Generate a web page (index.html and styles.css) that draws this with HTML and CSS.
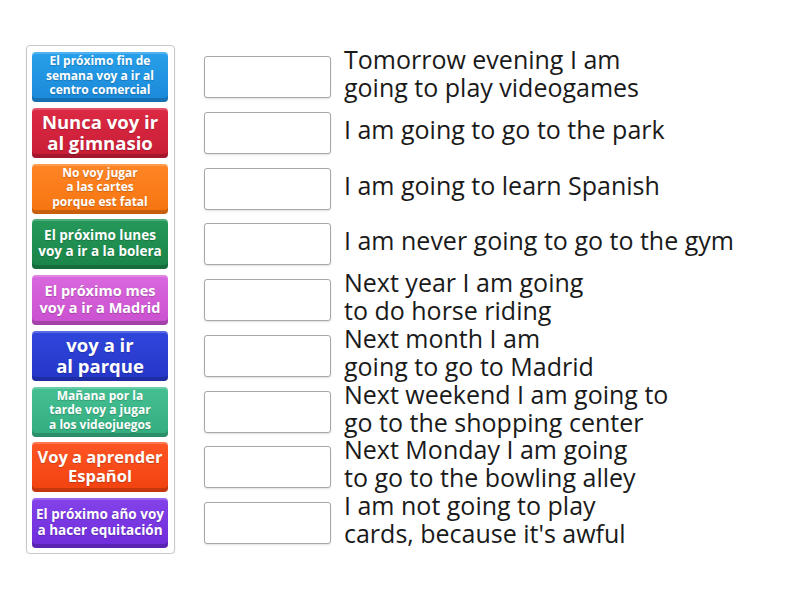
FILE: index.html
```html
<!DOCTYPE html>
<html>
<head>
<meta charset="utf-8">
<link rel="stylesheet" href="styles.css">
</head>
<body>
<div class="game">
  <div class="bank">
    <div class="tile t-blue s12">El próximo fin de<br>semana voy a ir al<br>centro comercial</div>
    <div class="tile t-red s18">Nunca voy ir<br>al gimnasio</div>
    <div class="tile t-orange s12">No voy jugar<br>a las cartes<br>porque est fatal</div>
    <div class="tile t-green s13">El próximo lunes<br>voy a ir a la bolera</div>
    <div class="tile t-pink s14">El próximo mes<br>voy a ir a Madrid</div>
    <div class="tile t-indigo s18">voy a ir<br>al parque</div>
    <div class="tile t-teal s12">Mañana por la<br>tarde voy a jugar<br>a los videojuegos</div>
    <div class="tile t-flame s16">Voy a aprender<br>Español</div>
    <div class="tile t-purple s13">El próximo año voy<br>a hacer equitación</div>
  </div>
  <div class="targets">
    <div class="row"><div class="slot"></div><div class="label">Tomorrow evening I am<br>going to play videogames</div></div>
    <div class="row"><div class="slot"></div><div class="label">I am going to go to the park</div></div>
    <div class="row"><div class="slot"></div><div class="label">I am going to learn Spanish</div></div>
    <div class="row"><div class="slot"></div><div class="label">I am never going to go to the gym</div></div>
    <div class="row"><div class="slot"></div><div class="label">Next year I am going<br>to do horse riding</div></div>
    <div class="row"><div class="slot"></div><div class="label">Next month I am<br>going to go to Madrid</div></div>
    <div class="row"><div class="slot"></div><div class="label">Next weekend I am going to<br>go to the shopping center</div></div>
    <div class="row"><div class="slot"></div><div class="label">Next Monday I am going<br>to go to the bowling alley</div></div>
    <div class="row"><div class="slot"></div><div class="label">I am not going to play<br>cards, because it's awful</div></div>
  </div>
</div>
</body>
</html>
```
FILE: styles.css
```css
html, body {
  margin: 0;
  padding: 0;
  background: #fff;
}
body {
  font-family: "Open Sans", "DejaVu Sans", sans-serif;
}
.game {
  display: flex;
  align-items: flex-start;
  padding: 45px 0 0 26px;
  gap: 29px;
}
.bank {
  width: 136px;
  padding: 6px 6px 5px 5px;
  border: 1px solid #c8c8c8;
  border-radius: 4px;
  display: flex;
  flex-direction: column;
  gap: 5.75px;
  box-shadow: 0 1px 2px rgba(0,0,0,0.08);
}
.tile {
  height: 50px;
  border-radius: 4px;
  color: #fff;
  font-weight: 700;
  text-align: center;
  display: flex;
  align-items: center;
  justify-content: center;
  box-sizing: border-box;
  padding-bottom: 2px;
  box-shadow: inset 0 -4px 0 rgba(0,0,0,0.18), inset 0 2px 0 rgba(255,255,255,0.2);
  text-shadow: 0 1px 1px rgba(0,0,0,0.2);
}
.s12 { font-size: 12px; line-height: 14.5px; }
.s13 { font-size: 13.5px; line-height: 16px; }
.s14 { font-size: 14.5px; line-height: 17px; }
.s16 { font-size: 16.5px; line-height: 19px; }
.s18 { font-size: 18.5px; line-height: 21px; }
.t-blue { background: linear-gradient(#27a0ea, #1b88d8); }
.t-red { background: linear-gradient(#dc2a44, #c81d36); }
.t-orange { background: linear-gradient(#ff8526, #f5740f); }
.t-green { background: linear-gradient(#25995a, #1a8447); }
.t-pink { background: linear-gradient(#da68dd, #c94fcf); }
.t-indigo { background: linear-gradient(#3046dc, #2536c8); }
.t-teal { background: linear-gradient(#45c093, #33ad7f); }
.t-flame { background: linear-gradient(#ff5524, #f1420f); }
.t-purple { background: linear-gradient(#8442ea, #6d2cd9); }
.targets {
  padding-top: 7px;
  display: flex;
  flex-direction: column;
  gap: 5.75px;
}
.row {
  height: 50px;
  display: flex;
  align-items: center;
  gap: 13px;
}
.slot {
  width: 125px;
  height: 40px;
  flex: none;
  border: 1px solid #a8a8a8;
  border-radius: 3px;
  background: #fff;
  box-shadow: 0 1px 2px rgba(0,0,0,0.12);
}
.label {
  font-size: 25px;
  line-height: 28px;
  color: #1a1a1a;
  white-space: nowrap;
  margin-bottom: 8px;
}
```
